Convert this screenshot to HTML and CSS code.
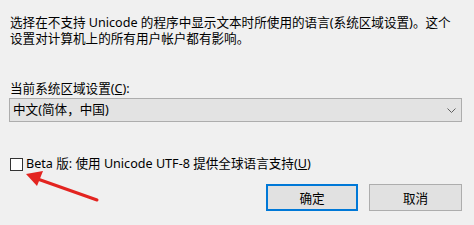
FILE: index.html
```html
<!DOCTYPE html>
<html lang="zh-CN">
<head>
  <meta charset="UTF-8">
  <title>区域设置</title>
  <link rel="stylesheet" href="styles.css">
</head>
<body>

  <div class="dialog">
    <p class="desc">选择在不支持 Unicode 的程序中显示文本时所使用的语言(系统区域设置)。这个<br>设置对计算机上的所有用户帐户都有影响。</p>

    <div class="label">当前系统区域设置(<u>C</u>):</div>
    <div class="select">
      <span>中文(简体，中国)</span>
      <svg class="chevron" width="9" height="5" viewBox="0 0 9 5">
        <path d="M0.5 0.5 L4.5 4.5 L8.5 0.5" fill="none" stroke="#606060" stroke-width="1"/>
      </svg>
    </div>

    <label class="check">
      <span class="box"></span>
      <span>Beta 版: 使用 Unicode UTF-8 提供全球语言支持(<u>U</u>)</span>
    </label>

    <div class="buttons">
      <button class="btn default">确定</button>
      <button class="btn">取消</button>
    </div>
  </div>

  <svg class="arrow" width="110" height="50" viewBox="0 0 110 50">
    <line x1="97" y1="29" x2="32" y2="6" stroke="#e32420" stroke-width="3" stroke-linecap="round"/>
    <polygon points="26,3 43,0 37,15" fill="#e32420"/>
  </svg>

</body>
</html>
```

FILE: styles.css
```css
body {
  margin: 0;
  background-color: #f0f0f0;
  font-family: "Noto Sans", "Noto Sans CJK SC", sans-serif;
  font-size: 12.6px;
  color: #000;
  height: 225px;
  overflow: hidden;
}

.dialog {
  padding: 15px 12px 0 10px;
  line-height: 16px;
}

.desc {
  margin: 0;
}

.label {
  margin-top: 34px;
}

.select {
  margin-top: 1px;
  margin-left: -1px;
  height: 22px;
  border: 1px solid #adadad;
  background-color: #e3e3e3;
  display: flex;
  align-items: center;
  justify-content: space-between;
  padding: 0 5px 0 3px;
}

.chevron {
  margin-top: 1px;
}

.check {
  margin-top: 34px;
  display: flex;
  align-items: center;
  gap: 3px;
}

.check .box {
  width: 11px;
  height: 11px;
  border: 1px solid #333;
  background-color: #fff;
}

.buttons {
  margin-top: 12px;
  display: flex;
  justify-content: flex-end;
  gap: 11px;
}

.btn {
  width: 93px;
  height: 27px;
  font-family: inherit;
  font-size: 12.6px;
  color: #000;
  background-color: #e1e1e1;
  border: 1px solid #adadad;
  padding: 0;
}

.btn.default {
  width: 92px;
  border: 2px solid #0078d7;
}

.arrow {
  position: absolute;
  left: 0;
  top: 171px;
}
```
